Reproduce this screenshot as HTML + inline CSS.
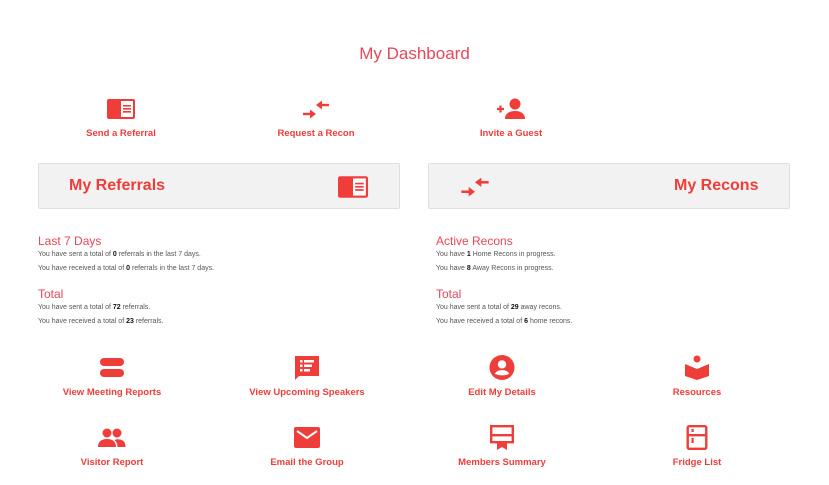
<!DOCTYPE html>
<html><head><meta charset="utf-8"><style>
*{margin:0;padding:0;box-sizing:border-box}
body{width:829px;height:485px;background:#fff;font-family:"Liberation Sans",sans-serif;position:relative;overflow:hidden;color:#ef3d3a}
.a{position:absolute}
.title{left:0;width:829px;top:44px;text-align:center;font-size:17px;color:#e8465a}
.lbl{font-size:9.5px;font-weight:bold;color:#ef3d3a;text-align:center;width:200px;margin-left:-100px}
.ic{transform:translateX(-50%)}
.box{background:#f2f2f2;border:1px solid #e0e0e0;border-radius:2px;height:46px;top:163px}
.bt{font-size:16px;font-weight:bold;color:#ef3d3a;top:13px}
.h{font-size:12px;color:#e8465a}
.p{font-size:7px;color:#555}
.p b{color:#111}
</style></head><body>
<div class="a title">My Dashboard</div>

<svg class="a ic" style="left:121px;top:99px" width="28" height="20" viewBox="0 0 28 20"><rect x="0" y="0" width="28" height="20" rx="2" fill="#ef3d3a"/><rect x="14" y="2" width="12" height="16" fill="#fff"/><rect x="16" y="6" width="8" height="1.6" fill="#ef3d3a"/><rect x="16" y="9" width="8" height="1.6" fill="#ef3d3a"/><rect x="16" y="12" width="8" height="1.6" fill="#ef3d3a"/></svg>
<div class="a lbl" style="left:121px;top:128px">Send a Referral</div>

<svg class="a" style="left:302px;top:99px" width="28" height="20" viewBox="0 0 28 20"><path d="M1 15h8" stroke="#ef3d3a" stroke-width="2.4"/><path d="M8 10.5l6 4.5-6 4.5z" fill="#ef3d3a"/><path d="M27 6h-8" stroke="#ef3d3a" stroke-width="2.4"/><path d="M20 1.5l-6 4.5 6 4.5z" fill="#ef3d3a"/></svg>
<div class="a lbl" style="left:316px;top:128px">Request a Recon</div>

<svg class="a" style="left:497px;top:98px" width="29" height="22" viewBox="0 0 29 22"><circle cx="18" cy="6" r="5.5" fill="#ef3d3a"/><path d="M8 21c0-6 5-8 10-8s10 2 10 8z" fill="#ef3d3a"/><path d="M0 11h7M3.5 7.5v7" stroke="#ef3d3a" stroke-width="2.2"/></svg>
<div class="a lbl" style="left:511px;top:128px">Invite a Guest</div>

<div class="a box" style="left:38px;width:362px"><div class="a bt" style="left:30px">My Referrals</div>
<svg class="a" style="left:299px;top:12px" width="30" height="22" viewBox="0 0 28 20"><rect x="0" y="0" width="28" height="20" rx="2" fill="#ef3d3a"/><rect x="14" y="2" width="12" height="16" fill="#fff"/><rect x="16" y="6" width="8" height="1.6" fill="#ef3d3a"/><rect x="16" y="9" width="8" height="1.6" fill="#ef3d3a"/><rect x="16" y="12" width="8" height="1.6" fill="#ef3d3a"/></svg></div>

<div class="a box" style="left:428px;width:362px">
<svg class="a" style="left:31px;top:12px" width="30" height="21" viewBox="0 0 28 20"><path d="M1 15h8" stroke="#ef3d3a" stroke-width="2.4"/><path d="M8 10.5l6 4.5-6 4.5z" fill="#ef3d3a"/><path d="M27 6h-8" stroke="#ef3d3a" stroke-width="2.4"/><path d="M20 1.5l-6 4.5 6 4.5z" fill="#ef3d3a"/></svg>
<div class="a bt" style="left:245px">My Recons</div></div>

<div class="a h" style="left:38px;top:234px">Last 7 Days</div>
<div class="a p" style="left:38px;top:251px">You have sent a total of <b>0</b> referrals in the last 7 days.</div>
<div class="a p" style="left:38px;top:265px">You have received a total of <b>0</b> referrals in the last 7 days.</div>
<div class="a h" style="left:38px;top:287px">Total</div>
<div class="a p" style="left:38px;top:304px">You have sent a total of <b>72</b> referrals.</div>
<div class="a p" style="left:38px;top:318px">You have received a total of <b>23</b> referrals.</div>

<div class="a h" style="left:436px;top:234px">Active Recons</div>
<div class="a p" style="left:436px;top:251px">You have <b>1</b> Home Recons in progress.</div>
<div class="a p" style="left:436px;top:265px">You have <b>8</b> Away Recons in progress.</div>
<div class="a h" style="left:436px;top:287px">Total</div>
<div class="a p" style="left:436px;top:304px">You have sent a total of <b>29</b> away recons.</div>
<div class="a p" style="left:436px;top:318px">You have received a total of <b>6</b> home recons.</div>

<svg class="a ic" style="left:112px;top:358px" width="24" height="20" viewBox="0 0 24 20"><rect x="0" y="0" width="24" height="8" rx="4" fill="#ef3d3a"/><rect x="0" y="11" width="24" height="8" rx="4" fill="#ef3d3a"/></svg>
<div class="a lbl" style="left:112px;top:387px">View Meeting Reports</div>

<svg class="a ic" style="left:307px;top:355px" width="26" height="26" viewBox="0 0 26 26"><path d="M1 1h24v20H5l-4 4z" fill="#ef3d3a"/><g fill="#fff"><rect x="6" y="5" width="2.5" height="2.5"/><rect x="10" y="5" width="10" height="2.5"/><rect x="6" y="9.5" width="2.5" height="2.5"/><rect x="10" y="9.5" width="8" height="2.5"/><rect x="6" y="14" width="2.5" height="2.5"/><rect x="10" y="14" width="6" height="2.5"/></g></svg>
<div class="a lbl" style="left:307px;top:387px">View Upcoming Speakers</div>

<svg class="a ic" style="left:502px;top:355px" width="25" height="25" viewBox="0 0 24 24"><circle cx="12" cy="12" r="12" fill="#ef3d3a"/><circle cx="12" cy="9" r="4" fill="#fff"/><path d="M5 18c2-3 4.5-3.5 7-3.5s5 .5 7 3.5c-2 1-4 1.5-7 1.5s-5-.5-7-1.5z" fill="#fff"/></svg>
<div class="a lbl" style="left:502px;top:387px">Edit My Details</div>

<svg class="a ic" style="left:697px;top:355px" width="24" height="25" viewBox="0 0 24 25"><circle cx="12" cy="4" r="3.5" fill="#ef3d3a"/><path d="M0 9l12 5 12-5v12l-12 4-12-4z" fill="#ef3d3a"/></svg>
<div class="a lbl" style="left:697px;top:387px">Resources</div>

<svg class="a ic" style="left:112px;top:428px" width="28" height="20" viewBox="0 0 28 20"><circle cx="9" cy="5" r="4.5" fill="#ef3d3a"/><circle cx="19" cy="5" r="4.5" fill="#ef3d3a"/><path d="M0 19c0-6 4-8 9-8s9 2 9 8z" fill="#ef3d3a"/><path d="M19.5 19c0-3-1-5-3-7 1-.5 2-.8 3-.8 5 0 8 2 8 7.8z" fill="#ef3d3a"/></svg>
<div class="a lbl" style="left:112px;top:457px">Visitor Report</div>

<svg class="a ic" style="left:307px;top:427px" width="26" height="21" viewBox="0 0 26 21"><rect x="0" y="0" width="26" height="21" rx="2" fill="#ef3d3a"/><path d="M3 4l10 7 10-7" stroke="#fff" stroke-width="2" fill="none"/></svg>
<div class="a lbl" style="left:307px;top:457px">Email the Group</div>

<svg class="a ic" style="left:502px;top:425px" width="24" height="25" viewBox="0 0 24 25"><rect x="1.2" y="1.2" width="21.6" height="16" fill="none" stroke="#ef3d3a" stroke-width="2.4"/><rect x="1" y="9" width="22" height="2.4" fill="#ef3d3a"/><path d="M7 17h10v8l-5-3-5 3z" fill="#ef3d3a"/></svg>
<div class="a lbl" style="left:502px;top:457px">Members Summary</div>

<svg class="a ic" style="left:697px;top:425px" width="21" height="25" viewBox="0 0 21 25"><rect x="1.2" y="1.2" width="18.6" height="22.6" rx="1.5" fill="none" stroke="#ef3d3a" stroke-width="2.4"/><rect x="1" y="9" width="19" height="2.4" fill="#ef3d3a"/><rect x="5" y="4" width="2.2" height="3" fill="#ef3d3a"/><rect x="5" y="13" width="2.2" height="5" fill="#ef3d3a"/></svg>
<div class="a lbl" style="left:697px;top:457px">Fridge List</div>
</body></html>
